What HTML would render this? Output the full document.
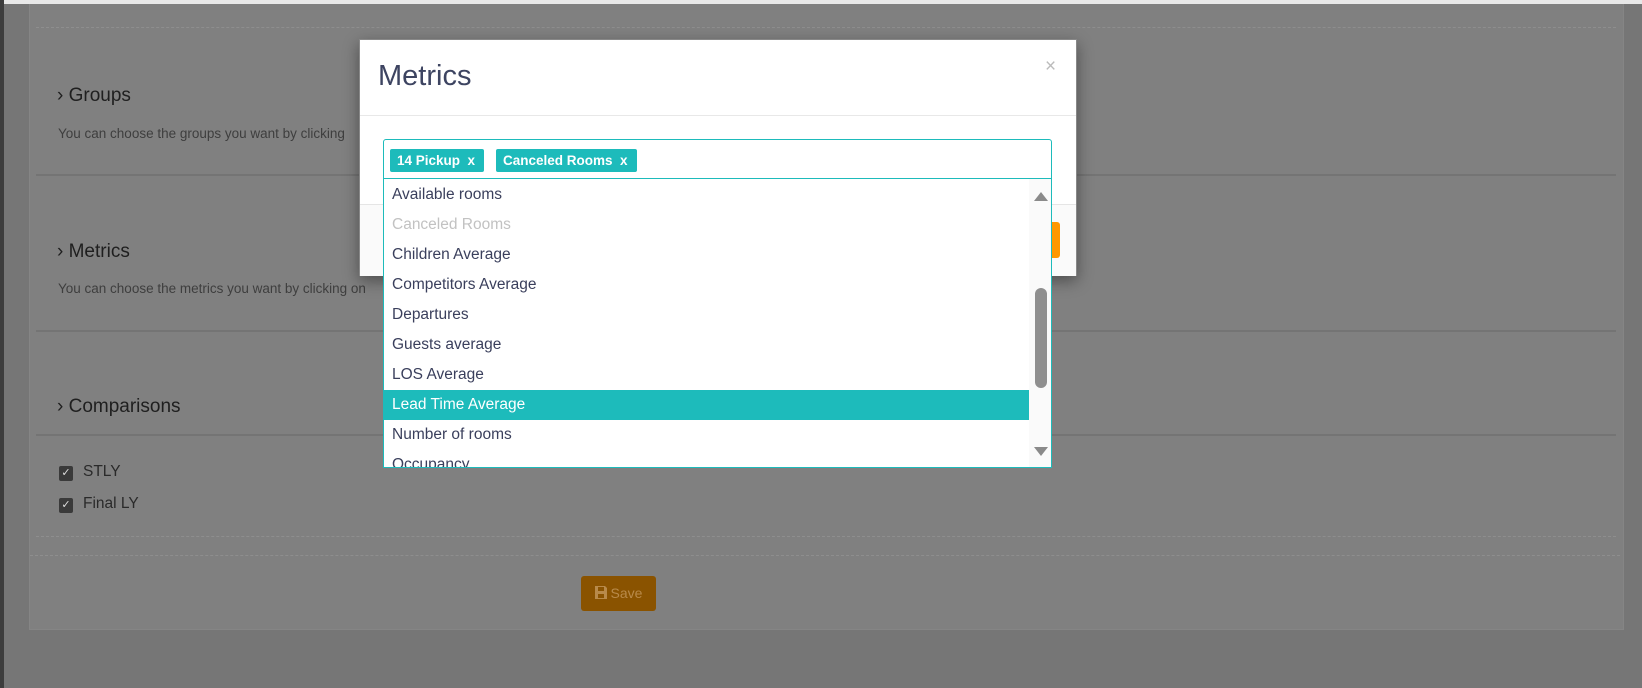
<!DOCTYPE html>
<html><head><meta charset="utf-8"><style>
*{box-sizing:border-box;margin:0;padding:0}
body{width:1642px;height:688px;overflow:hidden;background:#767676;font-family:"Liberation Sans",sans-serif;position:relative}
.a{position:absolute}
.txt{color:#2a2a2a}
.sub{color:#3e3e3e;font-size:13.5px}
.h{font-size:19px;color:#1f1f1f}
.dash{border-top:1px dashed #8e8e8e}
.sol{height:2px;background:#747474}
.item{position:absolute;left:8px;font-size:15.5px;color:#3a3f5c}
.cb{position:absolute;width:14px;height:15px;background:#3a3a3a;border-radius:2px;color:#ddd;font-size:11px;line-height:15px;text-align:center}
</style></head><body>
<div class="a" style="left:29px;top:0;width:1595px;height:630px;background:#808080;border:1px solid #858585;border-top:none"></div>
<div class="a" style="left:0;top:0;width:1642px;height:4px;background:#e8e8e8"></div>
<div class="a" style="left:0;top:0;width:4px;height:688px;background:#3d3d3d"></div>
<div class="a dash" style="left:36px;top:27px;width:1580px"></div>
<div class="a h" style="left:57px;top:85px">› Groups</div>
<div class="a sub" style="left:58px;top:126px">You can choose the groups you want by clicking</div>
<div class="a sol" style="left:36px;top:174px;width:1580px"></div>
<div class="a h" style="left:57px;top:241px">› Metrics</div>
<div class="a sub" style="left:58px;top:281px">You can choose the metrics you want by clicking on</div>
<div class="a sol" style="left:36px;top:330px;width:1580px"></div>
<div class="a h" style="left:57px;top:396px">› Comparisons</div>
<div class="a sol" style="left:36px;top:434px;width:1580px"></div>
<div class="cb" style="left:59px;top:466px">✓</div>
<div class="a txt" style="left:83px;top:463px;font-size:15.5px">STLY</div>
<div class="cb" style="left:59px;top:498px">✓</div>
<div class="a txt" style="left:83px;top:495px;font-size:15.5px">Final LY</div>
<div class="a dash" style="left:36px;top:536px;width:1580px"></div>
<div class="a dash" style="left:30px;top:555px;width:1590px"></div>
<div class="a" style="left:581px;top:576px;width:75px;height:35px;background:#8a5300;border-radius:3px;color:#b88a4a;font-size:14px;line-height:35px;text-align:center"><svg width="12" height="13" viewBox="0 0 12 13" style="vertical-align:-1px"><path d="M0 0h10l2 2v11H0z M3 1v4h6V1z M3 8v4h6V8z" fill="#b88a4a" fill-rule="evenodd"/></svg> Save</div>

<!-- modal -->
<div class="a" style="left:359px;top:39px;width:718px;height:237px;background:#fff;border:1px solid #888;box-shadow:0 5px 15px rgba(0,0,0,.4)">
  <div class="a" style="left:18px;top:20px;font-size:29px;color:#3d4461">Metrics</div>
  <div class="a" style="left:685px;top:16px;font-size:19px;color:#bbb">×</div>
  <div class="a" style="left:0;top:75px;width:716px;height:1px;background:#e8e8e8"></div>
  <div class="a" style="left:0;top:164px;width:716px;height:72px;background:#fafafa;border-top:1px solid #e5e5e5"></div>
  <div class="a" style="left:688px;top:182px;width:12px;height:36px;background:#ff9800;border-radius:0 3px 3px 0"></div>
</div>
<div class="a" style="left:383px;top:139px;width:669px;height:40px;background:#fff;border:1px solid #1dbbbb;border-radius:3px 3px 0 0">
  <div class="a" style="left:6px;top:9px;height:23px;padding:0 9px 0 7px;background:#1dbbbb;color:#fff;font-weight:bold;font-size:13.5px;line-height:23px;border-radius:2px">14 Pickup &nbsp;x</div>
  <div class="a" style="left:112px;top:9px;height:23px;padding:0 9px 0 7px;background:#1dbbbb;color:#fff;font-weight:bold;font-size:13.5px;line-height:23px;border-radius:2px">Canceled Rooms &nbsp;x</div>
</div>
<div class="a" style="left:383px;top:178px;width:669px;height:290px;background:#fff;border:1px solid #1dbbbb;overflow:hidden">
  <div class="item" style="top:7px">Available rooms</div>
  <div class="item" style="top:37px;color:#c2c2c2">Canceled Rooms</div>
  <div class="item" style="top:67px">Children Average</div>
  <div class="item" style="top:97px">Competitors Average</div>
  <div class="item" style="top:127px">Departures</div>
  <div class="item" style="top:157px">Guests average</div>
  <div class="item" style="top:187px">LOS Average</div>
  <div class="a" style="left:0;top:211px;width:645px;height:30px;background:#1dbbbb"></div>
  <div class="item" style="top:217px;color:#fff">Lead Time Average</div>
  <div class="item" style="top:247px">Number of rooms</div>
  <div class="item" style="top:277px">Occupancy</div>
  <div class="a" style="left:645px;top:0;width:22px;height:290px;background:#fafafa"></div>
  <div class="a" style="left:650px;top:13px;width:0;height:0;border-left:7px solid transparent;border-right:7px solid transparent;border-bottom:9px solid #8a8a8a"></div>
  <div class="a" style="left:650px;top:268px;width:0;height:0;border-left:7px solid transparent;border-right:7px solid transparent;border-top:9px solid #8a8a8a"></div>
  <div class="a" style="left:651px;top:109px;width:12px;height:100px;background:#8f8f8f;border-radius:6px"></div>
</div>
</body></html>
